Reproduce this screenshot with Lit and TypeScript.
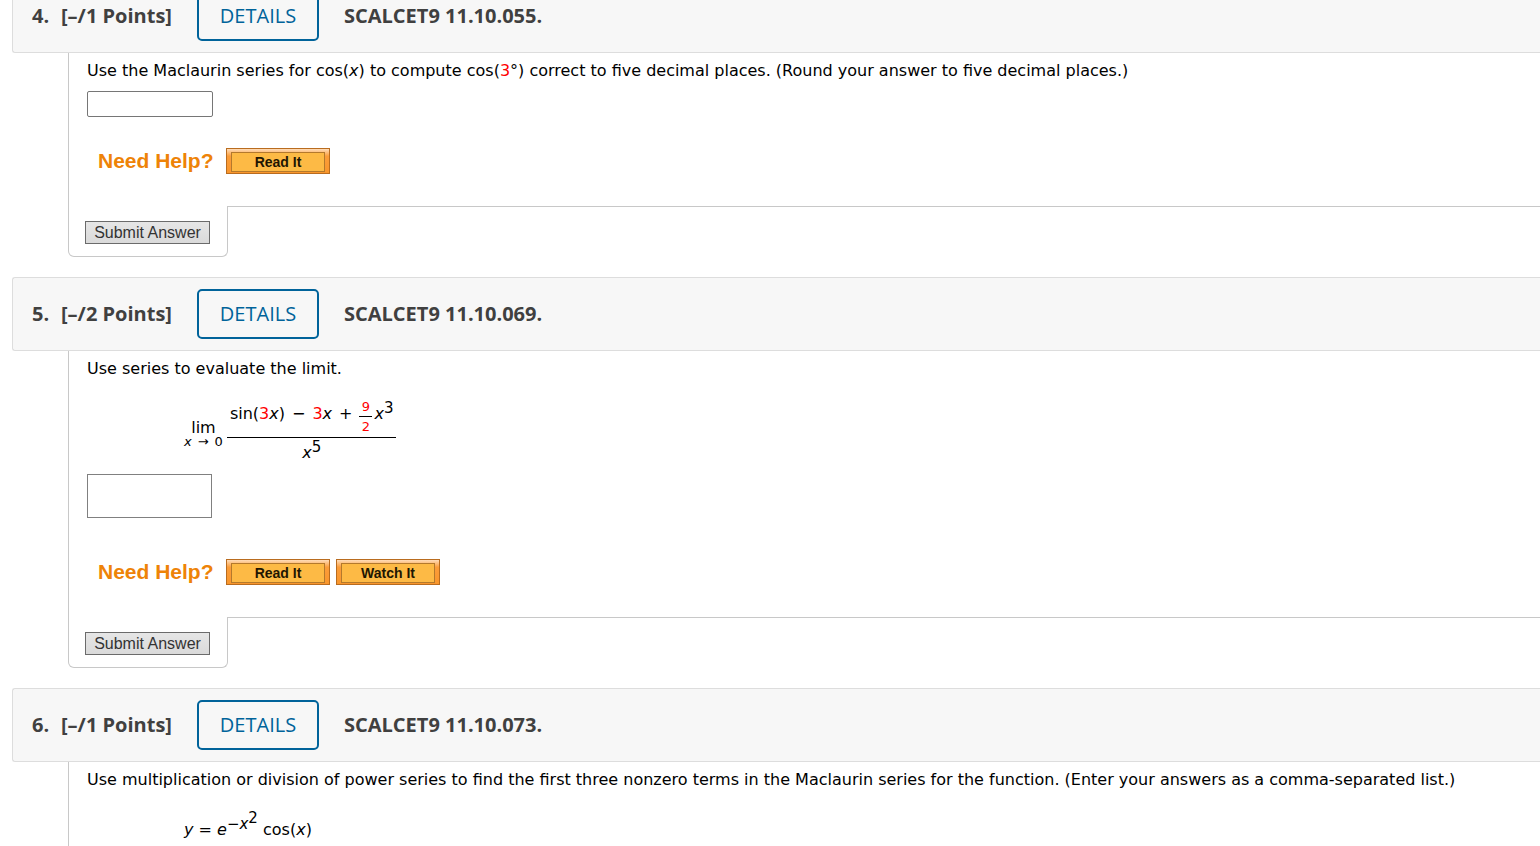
import { LitElement, html, css, TemplateResult } from "lit";
import { customElement, property } from "lit/decorators.js";

type HelpLink = "Read It" | "Watch It";

@customElement("need-help")
class NeedHelp extends LitElement {
  @property({ attribute: false }) links: HelpLink[] = [];

  static styles = css`
    :host {
      display: flex;
      align-items: center;
      gap: 6px;
      padding-left: 11px;
      font-family: "Liberation Sans", Arial, sans-serif;
      font-weight: bold;
    }
    .label {
      width: 122px;
      font-size: 21px;
      line-height: 26px;
      color: #ee8307;
      white-space: nowrap;
    }
    .help {
      box-sizing: border-box;
      width: 104px;
      height: 26px;
      padding: 3px 4px;
      border: 1px solid #b96c1f;
      background: linear-gradient(#ffdcb8, #fb9d3a 30%, #f9962c);
      font: bold 14px/18px "Liberation Sans", Arial, sans-serif;
      color: #1e1602;
    }
    .face {
      display: block;
      border: 1px solid #b4792c;
      background: #fdba45;
    }
  `;

  render() {
    return html`
      <span class="label">Need Help?</span>
      ${this.links.map(
        (l) => html`<button class="help" type="button"><span class="face">${l}</span></button>`
      )}
    `;
  }
}

@customElement("problem-header")
class ProblemHeader extends LitElement {
  @property() number = "";
  @property() points = "";
  @property() source = "";

  static styles = css`
    :host {
      display: flex;
      align-items: center;
      padding: 11px 0 11px 19px;
      border: 1px solid #ddd;
      border-right: 0;
      border-radius: 3px 0 0 3px;
      background: #f7f7f7;
      font: bold 20px/26px "Open Sans", sans-serif;
      color: #404040;
      white-space: nowrap;
    }
    .number {
      width: 29px;
    }
    .points {
      width: 136px;
    }
    .details {
      box-sizing: border-box;
      width: 122px;
      height: 50px;
      margin-right: 25px;
      padding: 0;
      border: 2px solid #00639a;
      border-radius: 5px;
      background: transparent;
      font: 500 20px/26px "Open Sans", sans-serif;
      color: #00639a;
    }
  `;

  render() {
    return html`
      <span class="number">${this.number}.</span>
      <span class="points">[–/${this.points}]</span>
      <button class="details" type="button">DETAILS</button>
      <span>${this.source}</span>
    `;
  }
}

@customElement("app-root")
class AppRoot extends LitElement {
  static styles = css`
    :host {
      display: block;
      height: 100vh;
      overflow: hidden;
      background: #fff;
      font: 16px/20px "DejaVu Sans", Verdana, sans-serif;
      color: #000;
    }
    .page {
      margin-top: -21px;
      padding-left: 12px;
    }
    .problem {
      margin-bottom: 20px;
    }
    .body {
      margin-left: 56px;
      padding: 8px 0 32px 18px;
      border-left: 1px solid #c8c8c8;
    }
    .prompt {
      margin: 0;
    }
    .prompt,
    .math {
      font-size: 16px;
      white-space: nowrap;
    }
    .var {
      font-style: italic;
    }
    .num {
      color: #f00;
    }
    .answer {
      display: block;
      box-sizing: border-box;
      width: 126px;
      height: 26px;
      margin: 10px 0 31px;
      border: 1px solid #767676;
      border-radius: 2px;
      font: inherit;
    }
    .answer.tall {
      width: 125px;
      height: 44px;
      margin: 6px 0 41px;
      border-color: #808080;
      border-radius: 0;
    }
    .foot {
      display: flex;
      margin-left: 56px;
    }
    .tab {
      box-sizing: border-box;
      width: 160px;
      padding: 15px 0 12px 16px;
      border: 1px solid #c8c8c8;
      border-top: 0;
      border-radius: 0 0 6px 6px;
    }
    .rule {
      flex: 1;
      border-top: 1px solid #c8c8c8;
    }
    .submit {
      display: block;
      box-sizing: border-box;
      width: 125px;
      height: 23px;
      padding: 0;
      border: 1px solid #6b6b6b;
      background: linear-gradient(#e6e6e6, #dadada);
      font: 16px/20px "Liberation Sans", Arial, sans-serif;
      color: #333;
    }
    .math {
      display: flex;
      padding-left: 97px;
    }
    .limit {
      margin-top: 18px;
      align-items: center;
    }
    .lim {
      display: grid;
      justify-items: center;
      margin: 4px 4px 0 0;
      line-height: 15px;
    }
    .under {
      display: flex;
      gap: 6px;
      font-size: 13px;
      line-height: 14px;
    }
    .frac {
      display: grid;
      justify-items: center;
    }
    .top {
      display: flex;
      align-items: flex-start;
      gap: 7px;
      padding: 0 3px 1px;
      border-bottom: 1px solid #000;
      line-height: 34px;
    }
    .bottom {
      line-height: 30px;
    }
    .small {
      display: grid;
      justify-items: center;
      width: 13px;
      font-size: 13px;
      line-height: 19px;
      color: #f00;
    }
    .small-top {
      width: 13px;
      border-bottom: 1px solid #000;
      text-align: center;
    }
    .term {
      display: flex;
      align-items: flex-start;
      gap: 2px;
    }
    sup {
      font-size: 15px;
      line-height: 0;
      vertical-align: 6px;
    }
    .power {
      margin-top: 28px;
      line-height: 18px;
    }
  `;

  private problem(
    number: string,
    points: string,
    source: string,
    content: TemplateResult,
    submit = true
  ) {
    return html`
      <section class="problem">
        <problem-header number=${number} points=${points} source=${source}></problem-header>
        <div class="body">${content}</div>
        ${submit
          ? html`<div class="foot">
              <div class="tab"><button class="submit" type="button">Submit Answer</button></div>
              <div class="rule"></div>
            </div>`
          : ""}
      </section>
    `;
  }

  render() {
    const x = html`<span class="var">x</span>`;
    return html`
      <main class="page">
        ${this.problem(
          "4",
          "1 Points",
          "SCALCET9 11.10.055.",
          html`
            <p class="prompt" id="q4">Use the Maclaurin series for cos(${x}) to compute cos(<span class="num">3</span>°) correct to five decimal places. (Round your answer to five decimal places.)</p>
            <input class="answer" type="text" aria-labelledby="q4" />
            <need-help .links=${["Read It"]}></need-help>
          `
        )}
        ${this.problem(
          "5",
          "2 Points",
          "SCALCET9 11.10.069.",
          html`
            <p class="prompt" id="q5">Use series to evaluate the limit.</p>
            <div class="math limit">
              <div class="lim"><span>lim</span><span class="under">${x}<span>→</span><span>0</span></span></div>
              <div class="frac">
                <div class="top">
                  <span>sin(<span class="num">3</span>${x})</span>
                  <span>−</span>
                  <span><span class="num">3</span>${x}</span>
                  <span>+</span>
                  <span class="term">
                    <span class="small"><span class="small-top">9</span><span>2</span></span>
                    <span>${x}<sup>3</sup></span>
                  </span>
                </div>
                <div class="bottom">${x}<sup>5</sup></div>
              </div>
            </div>
            <input class="answer tall" type="text" aria-labelledby="q5" />
            <need-help .links=${["Read It", "Watch It"]}></need-help>
          `
        )}
        ${this.problem(
          "6",
          "1 Points",
          "SCALCET9 11.10.073.",
          html`
            <p class="prompt">Use multiplication or division of power series to find the first three nonzero terms in the Maclaurin series for the function. (Enter your answers as a comma-separated list.)</p>
            <div class="math power"><span><span class="var">y</span> = <span class="var">e</span><sup>−${x}<sup>2</sup></sup> cos(${x})</span></div>
          `,
          false
        )}
      </main>
    `;
  }
}
